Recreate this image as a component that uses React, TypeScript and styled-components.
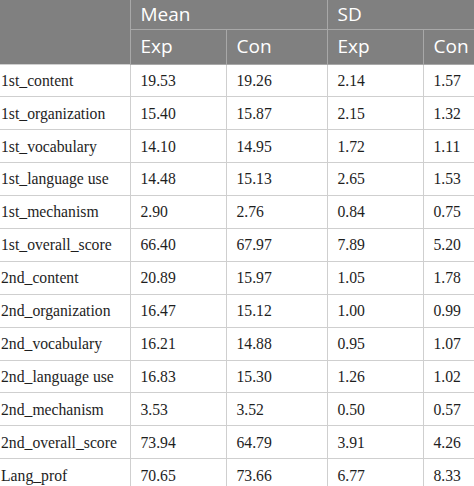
import React from "react";
import styled, { createGlobalStyle } from "styled-components";

const Global = createGlobalStyle`
  html, body { margin: 0; padding: 0; background: #ffffff; overflow: hidden; }
`;

const Table = styled.table`
  border-collapse: collapse;
  table-layout: fixed;
  width: 523px;
  font-family: "Liberation Serif", "Times New Roman", serif;
`;

const HeadCell = styled.th<{ $h: number }>`
  background: #808080;
  color: #ffffff;
  font-family: "Open Sans", "Noto Sans", sans-serif;
  font-weight: 400;
  font-size: 19px;
  text-align: left;
  padding: 0 0 0 10px;
  height: ${(p) => p.$h}px;
  border: 1px solid #a8a8a8;
  border-top: none;
  box-sizing: border-box;
  line-height: 1;
`;

const CornerCell = styled.th`
  background: #808080;
  border: none;
  border-right: 1px solid #a8a8a8;
`;

const LabelCell = styled.td`
  font-size: 15.7px;
  line-height: 1.1;
  color: #1e1e1e;
  padding: 0 0 0 1px;
  height: 31.9px;
  border: 1px solid #cfcfcf;
  border-left: none;
  white-space: nowrap;
`;

const ValueCell = styled.td`
  font-size: 15.7px;
  line-height: 1.1;
  color: #1e1e1e;
  padding: 0 0 0 10px;
  border: 1px solid #cfcfcf;
`;

const rows: [string, string, string, string, string][] = [
  ["1st_content", "19.53", "19.26", "2.14", "1.57"],
  ["1st_organization", "15.40", "15.87", "2.15", "1.32"],
  ["1st_vocabulary", "14.10", "14.95", "1.72", "1.11"],
  ["1st_language use", "14.48", "15.13", "2.65", "1.53"],
  ["1st_mechanism", "2.90", "2.76", "0.84", "0.75"],
  ["1st_overall_score", "66.40", "67.97", "7.89", "5.20"],
  ["2nd_content", "20.89", "15.97", "1.05", "1.78"],
  ["2nd_organization", "16.47", "15.12", "1.00", "0.99"],
  ["2nd_vocabulary", "16.21", "14.88", "0.95", "1.07"],
  ["2nd_language use", "16.83", "15.30", "1.26", "1.02"],
  ["2nd_mechanism", "3.53", "3.52", "0.50", "0.57"],
  ["2nd_overall_score", "73.94", "64.79", "3.91", "4.26"],
  ["Lang_prof", "70.65", "73.66", "6.77", "8.33"],
];

export default function App() {
  return (
    <>
      <Global />
      <Table>
        <colgroup>
          <col style={{ width: 130 }} />
          <col style={{ width: 96 }} />
          <col style={{ width: 101 }} />
          <col style={{ width: 96 }} />
          <col style={{ width: 100 }} />
        </colgroup>
        <thead>
          <tr>
            <CornerCell rowSpan={2} />
            <HeadCell $h={29} colSpan={2}>Mean</HeadCell>
            <HeadCell $h={29} colSpan={2}>SD</HeadCell>
          </tr>
          <tr>
            <HeadCell $h={35}>Exp</HeadCell>
            <HeadCell $h={35}>Con</HeadCell>
            <HeadCell $h={35}>Exp</HeadCell>
            <HeadCell $h={35}>Con</HeadCell>
          </tr>
        </thead>
        <tbody>
          {rows.map((r) => (
            <tr key={r[0]}>
              <LabelCell>{r[0]}</LabelCell>
              <ValueCell>{r[1]}</ValueCell>
              <ValueCell>{r[2]}</ValueCell>
              <ValueCell>{r[3]}</ValueCell>
              <ValueCell>{r[4]}</ValueCell>
            </tr>
          ))}
        </tbody>
      </Table>
    </>
  );
}
